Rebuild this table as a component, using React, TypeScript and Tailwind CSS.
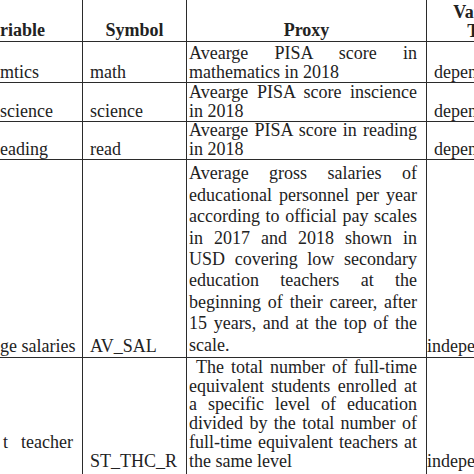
const line = "border-r border-b border-[#2b2b2b]"

type Row = {
  h: string
  pb: string
  v: React.ReactNode
  sym: string
  proxy: string[]
  lh: string
  type: string
}

function Proxy({ lines, lh }: { lines: string[]; lh: string }) {
  return (
    <div className={lh}>
      {lines.map((t, i) => (
        <div
          key={i}
          className={
            i < lines.length - 1
              ? "whitespace-nowrap text-justify [text-align-last:justify]"
              : "whitespace-nowrap"
          }
        >
          {t}
        </div>
      ))}
    </div>
  )
}

const rows: Row[] = [
  {
    h: "h-[41px]",
    pb: "pb-0",
    v: "mtics",
    sym: "math",
    proxy: ["Avearge PISA score in", "mathematics in 2018"],
    lh: "leading-[19px]",
    type: "dependent",
  },
  {
    h: "h-[39px]",
    pb: "pb-0",
    v: "science",
    sym: "science",
    proxy: ["Avearge PISA score inscience", "in 2018"],
    lh: "leading-[19px]",
    type: "dependent",
  },
  {
    h: "h-[38px]",
    pb: "pb-0",
    v: "eading",
    sym: "read",
    proxy: ["Avearge PISA score in reading", "in 2018"],
    lh: "leading-[19px]",
    type: "dependent",
  },
  {
    h: "h-[198px]",
    pb: "pb-[1px]",
    v: "ge salaries",
    sym: "AV_SAL",
    proxy: [
      "Average gross salaries of",
      "educational personnel per year",
      "according to official pay scales",
      "in 2017 and 2018 shown in",
      "USD covering low secondary",
      "education teachers at the",
      "beginning of their career, after",
      "15 years, and at the top of the",
      "scale.",
    ],
    lh: "leading-[21.4px]",
    type: "independent",
  },
]

export default function App() {
  return (
    <div className="w-[474px] h-[474px] overflow-hidden bg-white text-[18px] text-[#222] font-['Liberation_Serif',serif]">
      <div className="grid w-[516px] grid-cols-[83px_104px_240px_89px]">
        {/* header */}
        <div className={`${line} h-[42px] flex items-end pb-[1px] font-bold leading-[19px]`}>riable</div>
        <div className={`${line} h-[42px] flex items-end justify-center pb-[1px] font-bold leading-[19px]`}>Symbol</div>
        <div className={`${line} h-[42px] flex items-end justify-center pb-[1px] font-bold leading-[19px]`}>Proxy</div>
        <div className={`${line} h-[42px] flex flex-col items-center justify-end pl-[30px] pb-0 font-bold leading-[19px]`}>
          <span>Variable</span>
          <span>Type</span>
        </div>

        {rows.map((r) => (
          <div key={r.sym} className="contents">
            <div className={`${line} ${r.h} ${r.pb} flex items-end leading-[19px] whitespace-nowrap`}>{r.v}</div>
            <div className={`${line} ${r.h} ${r.pb} flex items-end pl-[7px] leading-[19px]`}>{r.sym}</div>
            <div className={`${line} ${r.h} ${r.pb} flex flex-col justify-end pl-[2px] pr-[9px]`}>
              <Proxy lines={r.proxy} lh={r.lh} />
            </div>
            <div className={`${line} ${r.h} ${r.pb} flex items-end justify-center leading-[19px]`}>{r.type}</div>
          </div>
        ))}

        {/* last row, runs past the crop */}
        <div className={`${line} h-[130px] flex flex-col leading-[18.7px]`}>
          <div className="h-[74.8px]" />
          <div className="flex justify-between pl-[3px] pr-[9px]">
            <span>t</span>
            <span>teacher</span>
          </div>
        </div>
        <div className={`${line} h-[130px] flex flex-col pl-[7px] leading-[18.7px]`}>
          <div className="h-[93.5px]" />
          <span>ST_THC_R</span>
        </div>
        <div className={`${line} h-[130px] pl-[2px] pr-[9px]`}>
          <Proxy
            lh="leading-[18.7px]"
            lines={[
              "\u00a0The total number of full-time",
              "equivalent students enrolled at",
              "a specific level of education",
              "divided by the total number of",
              "full-time equivalent teachers at",
              "the same level",
            ]}
          />
        </div>
        <div className={`${line} h-[130px] flex flex-col items-center leading-[18.7px]`}>
          <div className="h-[93.5px]" />
          <span>independent</span>
        </div>
      </div>
    </div>
  )
}
